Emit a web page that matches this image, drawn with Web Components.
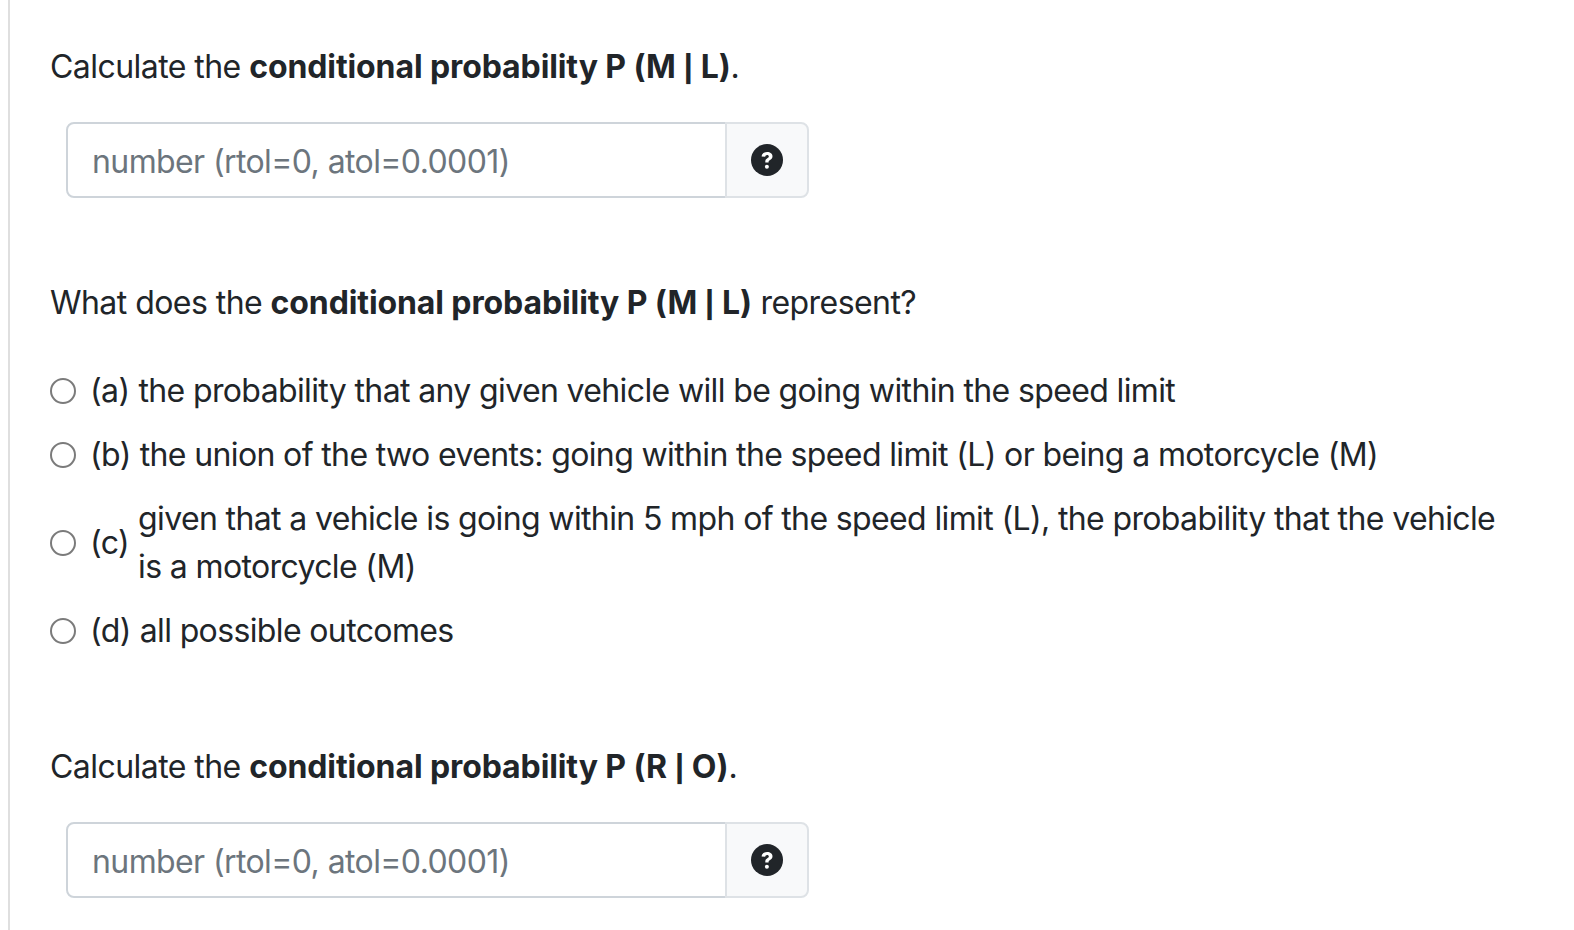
<!DOCTYPE html>
<html>
<head>
<meta charset="utf-8">
<title>Conditional probability</title>
<style>
  html, body { margin: 0; padding: 0; height: 100%; overflow: hidden; background: #fff; }
  body { font-family: Inter, "Liberation Sans", sans-serif; color: #212529; }
  b { font-weight: 700; letter-spacing: -0.1px; }
  .bar { font-size: 26px; font-weight: 800; line-height: 0; }
</style>
</head>
<body>
<question-card>
  <question-text>Calculate the <b>conditional probability P (M <span class="bar">|</span> L)</b>.</question-text>
  <number-input></number-input>
  <question-text style="margin-top:81px">What does the <b>conditional probability P (M <span class="bar">|</span> L)</b> represent?</question-text>
  <radio-group>
    <radio-option key="(a)">the probability that any given vehicle will be going within the speed limit</radio-option>
    <radio-option key="(b)">the union of the two events: going within the speed limit (L) or being a motorcycle (M)</radio-option>
    <radio-option key="(c)">given that a vehicle is going within 5 mph of the speed limit (L), the probability that the vehicle is a motorcycle (M)</radio-option>
    <radio-option key="(d)">all possible outcomes</radio-option>
  </radio-group>
  <question-text style="margin-top:88px">Calculate the <b>conditional probability P (R <span class="bar">|</span> O)</b>.</question-text>
  <number-input></number-input>
</question-card>

<script>
class QuestionCard extends HTMLElement {
    constructor() {
        super();
        this.attachShadow({mode: "open"}).innerHTML = `
          <style>
            :host {
              display: block;
              margin-left: 8px;
              border-left: 2px solid #dfdfdf;
              padding: 43px 64px 0 40px;
              font-size: 32px;
              line-height: 48px;
              min-height: 930px;
              box-sizing: border-box;
            }
          </style>
          <slot></slot>`;
    }
}

class QuestionText extends HTMLElement {
    constructor() {
        super();
        this.attachShadow({mode: "open"}).innerHTML = `
          <style>
            :host { display: block; letter-spacing: -0.55px; }
          </style>
          <slot></slot>`;
    }
}

class NumberInput extends HTMLElement {
    constructor() {
        super();
        this.attachShadow({mode: "open"}).innerHTML = `
          <style>
            :host { display: flex; width: 743px; height: 76px; margin: 31px 0 0 16px; box-sizing: border-box; }
            .field {
              flex: 1;
              display: flex;
              align-items: center;
              box-sizing: border-box;
              padding: 3px 0 0 24px;
              border: 2px solid #ced4da;
              border-radius: 8px 0 0 8px;
              color: #6c757d;
              letter-spacing: -0.6px;
              background: #fff;
            }
            .addon {
              width: 84px;
              display: flex;
              align-items: center;
              justify-content: center;
              box-sizing: border-box;
              margin-left: -2px;
              border: 2px solid #dee2e6;
              border-radius: 0 8px 8px 0;
              background: #f8f9fa;
            }
            svg { display: block; }
          </style>
          <div class="field">number (rtol=0, atol=0.0001)</div>
          <div class="addon">
            <svg width="32" height="32" viewBox="0 0 32 32">
              <circle cx="16" cy="16" r="16" fill="#212529"/>
              <path d="M10.6 12.6c.1-3 2.4-4.6 5.5-4.6 3.2 0 5.4 1.7 5.4 4.2 0 1.7-.9 2.8-2.4 3.7-1.2.7-1.5 1.1-1.5 2v.5h-3.3v-.8c0-1.7.7-2.6 2-3.4 1.1-.7 1.5-1.1 1.5-1.8 0-.8-.7-1.4-1.7-1.4s-1.8.7-1.9 1.8z" fill="#fff"/>
              <circle cx="15.9" cy="22.8" r="2" fill="#fff"/>
            </svg>
          </div>`;
    }
}

class RadioGroup extends HTMLElement {
    constructor() {
        super();
        this.attachShadow({mode: "open"}).innerHTML = `
          <style>
            :host { display: flex; flex-direction: column; gap: 16px; margin-top: 40px; letter-spacing: -0.63px; }
          </style>
          <slot></slot>`;
    }
}

class RadioOption extends HTMLElement {
    constructor() {
        super();
        this.attachShadow({mode: "open"}).innerHTML = `
          <style>
            :host { display: flex; align-items: center; }
            .dot {
              flex: none;
              width: 26px;
              height: 26px;
              box-sizing: border-box;
              border: 2px solid #7b7b7b;
              border-radius: 50%;
              background: #fff;
              margin-right: 14px;
            }
            .key { flex: none; margin-right: 9px; }
          </style>
          <span class="dot"></span>
          <span class="key"></span>
          <span><slot></slot></span>`;
        this.shadowRoot.querySelector(".key").textContent = this.getAttribute("key");
    }
}

customElements.define("question-card", QuestionCard);
customElements.define("question-text", QuestionText);
customElements.define("number-input", NumberInput);
customElements.define("radio-group", RadioGroup);
customElements.define("radio-option", RadioOption);
</script>
</body>
</html>
